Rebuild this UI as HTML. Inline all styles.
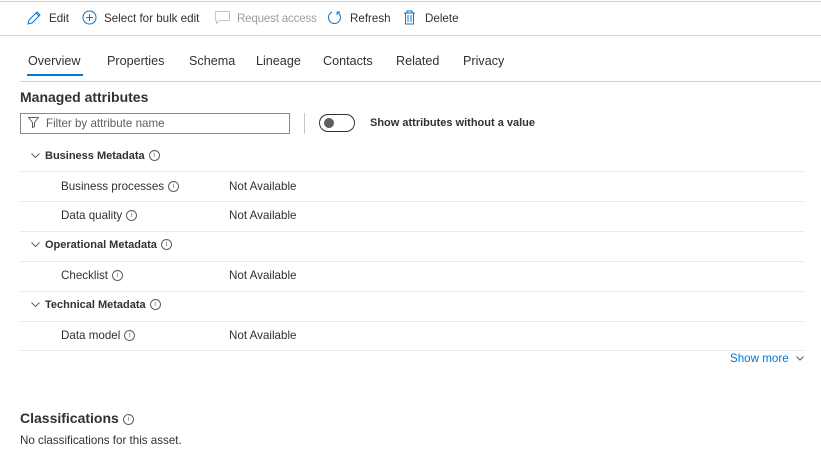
<!DOCTYPE html>
<html><head><style>
body{margin:0;width:821px;height:463px;background:#fff;font-family:"Liberation Sans",sans-serif;color:#323130;position:relative;overflow:hidden;font-size:11.6px}
.a{position:absolute;white-space:nowrap}
.hl{position:absolute;height:1px;background:#edebe9}
.i{display:inline-block;width:9px;height:9px;border:1px solid #605e5c;border-radius:50%;font-size:7px;line-height:9px;text-align:center;vertical-align:2px;margin-left:4px;color:#605e5c;font-weight:normal}
.tb{font-size:11.6px;top:12px}
.tab{top:54px;font-size:12.6px}
.b{font-weight:bold;font-size:11px}
.chev{position:absolute;left:31px}
</style></head><body>
<div class="hl" style="top:1px;left:0;width:821px;background:#d2d0ce"></div>
<div class="hl" style="top:35px;left:0;width:821px;background:#d2d0ce"></div>
<svg class="a" style="left:26px;top:10px" width="16" height="16" viewBox="0 0 16 16"><path d="M2 14l1-4 8-8 3 3-8 8z M10 3l3 3" fill="none" stroke="#0078d4" stroke-width="1"/></svg>
<div class="a tb" style="left:49px">Edit</div>
<svg class="a" style="left:82px;top:10px" width="15" height="15" viewBox="0 0 15 15"><circle cx="7.5" cy="7.5" r="6.5" fill="none" stroke="#0078d4"/><path d="M7.5 4v7M4 7.5h7" stroke="#0078d4"/></svg>
<div class="a tb" style="left:104px">Select for bulk edit</div>
<svg class="a" style="left:214px;top:10px" width="17" height="15" viewBox="0 0 17 15"><path d="M1.5 1.5h14v9h-9l-4 3v-3h-1z" fill="none" stroke="#c8c6c4"/></svg>
<div class="a tb" style="left:237px;color:#a19f9d;letter-spacing:-0.2px">Request access</div>
<svg class="a" style="left:327px;top:10px" width="15" height="15" viewBox="0 0 15 15"><path d="M5 2A6 6 0 1 0 10 2M10 2v3M10 2h3" fill="none" stroke="#0078d4"/></svg>
<div class="a tb" style="left:350px">Refresh</div>
<svg class="a" style="left:403px;top:10px" width="13" height="15" viewBox="0 0 13 15"><path d="M1 3h11M4 3V1h5v2M2.5 3v11h8V3M5 5v7M8 5v7" fill="none" stroke="#0078d4"/></svg>
<div class="a tb" style="left:425px">Delete</div>
<div class="a tab" style="left:28px">Overview</div>
<div class="hl" style="top:74px;left:27px;width:56px;height:2px;background:#0078d4"></div>
<div class="a tab" style="left:107px">Properties</div>
<div class="a tab" style="left:189px">Schema</div>
<div class="a tab" style="left:256px">Lineage</div>
<div class="a tab" style="left:323px">Contacts</div>
<div class="a tab" style="left:396px">Related</div>
<div class="a tab" style="left:463px">Privacy</div>
<div class="hl" style="top:81px;left:20px;width:801px;background:#d2d0ce"></div>
<div class="a" style="left:20px;top:89px;font-size:14px;font-weight:bold">Managed attributes</div>
<div class="a" style="left:20px;top:113px;width:268px;height:19px;border:1px solid #8a8886"></div>
<svg class="a" style="left:28px;top:117px" width="11" height="11" viewBox="0 0 11 11"><path d="M0.5 0.5h10l-4 5v4l-2 1v-5z" fill="none" stroke="#605e5c"/></svg>
<div class="a" style="left:46px;top:117px;color:#605e5c">Filter by attribute name</div>
<div class="a" style="left:304px;top:113px;width:1px;height:21px;background:#c8c6c4"></div>
<div class="a" style="left:319px;top:114px;width:34px;height:16px;border:1px solid #323130;border-radius:10px"></div>
<div class="a" style="left:324px;top:118px;width:10px;height:10px;border-radius:50%;background:#605e5c"></div>
<div class="a b" style="left:370px;top:117px">Show attributes without a value</div>

<svg class="chev" style="top:153px" width="9" height="5" viewBox="0 0 9 5"><path d="M0.5 0.5l4 4 4-4" fill="none" stroke="#605e5c"/></svg>
<div class="a b" style="left:45px;top:150px">Business Metadata<span class="i">i</span></div>
<div class="hl" style="top:171px;left:20px;width:784px"></div>
<div class="a" style="left:61px;top:180px">Business processes<span class="i">i</span></div>
<div class="a" style="left:229px;top:180px">Not Available</div>
<div class="hl" style="top:201px;left:20px;width:784px"></div>
<div class="a" style="left:61px;top:209px">Data quality<span class="i">i</span></div>
<div class="a" style="left:229px;top:209px">Not Available</div>
<div class="hl" style="top:231px;left:20px;width:784px"></div>
<svg class="chev" style="top:242px" width="9" height="5" viewBox="0 0 9 5"><path d="M0.5 0.5l4 4 4-4" fill="none" stroke="#605e5c"/></svg>
<div class="a b" style="left:45px;top:239px">Operational Metadata<span class="i">i</span></div>
<div class="hl" style="top:261px;left:20px;width:784px"></div>
<div class="a" style="left:61px;top:269px">Checklist<span class="i">i</span></div>
<div class="a" style="left:229px;top:269px">Not Available</div>
<div class="hl" style="top:291px;left:20px;width:784px"></div>
<svg class="chev" style="top:302px" width="9" height="5" viewBox="0 0 9 5"><path d="M0.5 0.5l4 4 4-4" fill="none" stroke="#605e5c"/></svg>
<div class="a b" style="left:45px;top:299px">Technical Metadata<span class="i">i</span></div>
<div class="hl" style="top:321px;left:20px;width:784px"></div>
<div class="a" style="left:61px;top:329px">Data model<span class="i">i</span></div>
<div class="a" style="left:229px;top:329px">Not Available</div>
<div class="hl" style="top:350px;left:20px;width:784px"></div>
<div class="a" style="left:730px;top:352px;color:#0078d4">Show more</div>
<svg class="a" style="left:796px;top:356px" width="8" height="5" viewBox="0 0 8 5"><path d="M0.5 0.5l3.5 3.5 3.5-3.5" fill="none" stroke="#605e5c"/></svg>
<div class="a" style="left:20px;top:410px;font-size:14px;font-weight:bold">Classifications<span class="i">i</span></div>
<div class="a" style="left:20px;top:434px">No classifications for this asset.</div>
</body></html>
